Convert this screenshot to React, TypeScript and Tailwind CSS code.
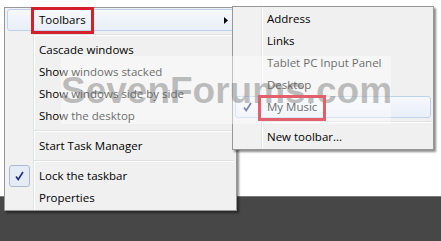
import type { ReactNode } from "react";

type Item = { label?: string; sep?: boolean; checked?: boolean; hover?: boolean; submenu?: boolean };

const mainItems: Item[] = [
  { label: "Toolbars", hover: true, submenu: true },
  { sep: true },
  { label: "Cascade windows" },
  { label: "Show windows stacked" },
  { label: "Show windows side by side" },
  { label: "Show the desktop" },
  { sep: true },
  { label: "Start Task Manager" },
  { sep: true },
  { label: "Lock the taskbar", checked: true },
  { label: "Properties" },
];

const toolbarItems: Item[] = [
  { label: "Address" },
  { label: "Links" },
  { label: "Tablet PC Input Panel" },
  { label: "Desktop" },
  { label: "My Music", checked: true, hover: true },
  { sep: true },
  { label: "New toolbar..." },
];

function Check() {
  return (
    <svg width="9" height="10" viewBox="0 0 9 10">
      <path d="M1 5.5 L3.2 8.5 L8 1" fill="none" stroke="#1f2d86" strokeWidth="1.6" />
    </svg>
  );
}

function Row({ item, boxed }: { item: Item; boxed: boolean }) {
  if (item.sep) {
    return (
      <div className="flex h-[8px] flex-col justify-center pl-[29px] pr-[2px]">
        <div className="h-px bg-[#e0e0e0]" />
        <div className="h-px bg-white" />
      </div>
    );
  }

  let mark: ReactNode = null;
  if (item.checked) {
    mark = boxed ? (
      <div className="ml-px flex h-[22px] w-[21px] items-center justify-center rounded-[3px] border border-[#aeb9d0] bg-[#e6ecf6]">
        <Check />
      </div>
    ) : (
      <div className="flex w-[22px] justify-center">
        <Check />
      </div>
    );
  }

  return (
    <div
      className={`mx-[2px] flex h-[22px] items-center rounded-[3px] border ${
        item.hover
          ? "border-[#bcd2ec] bg-[linear-gradient(#f5f8fc,#e9eff8)]"
          : "border-transparent"
      }`}
    >
      <div className="flex w-[31px] items-center">{mark}</div>
      <span className="flex-1 text-black">{item.label}</span>
      {item.submenu && (
        <svg width="4" height="7" viewBox="0 0 4 7" className="mr-[5px]">
          <path d="M0 0 L4 3.5 L0 7 Z" fill="#000" />
        </svg>
      )}
    </div>
  );
}

function Menu({ items, boxed, className }: { items: Item[]; boxed: boolean; className: string }) {
  return (
    <div
      className={`absolute border border-[#979797] bg-[linear-gradient(to_right,#f1f1f1_28px,#e2e3e3_28px,#e2e3e3_29px,#ffffff_29px,#ffffff_30px,#f0f0f0_30px)] py-px shadow-[2px_2px_2px_rgba(0,0,0,0.45)] ${className}`}
    >
      {items.map((item, i) => (
        <Row key={i} item={item} boxed={boxed} />
      ))}
    </div>
  );
}

export default function App() {
  return (
    <div className="relative h-[241px] w-[441px] overflow-hidden bg-white font-['Open_Sans','Noto_Sans',sans-serif] text-[11.5px] leading-none">
      <div className="h-[196px] bg-white" />
      <div className="h-[45px] border-t border-[#7a7a7a] bg-[#474747]" />

      <Menu items={mainItems} boxed className="left-[4px] top-[7px] w-[233px]" />
      <Menu items={toolbarItems} boxed={false} className="left-[232px] top-[6px] w-[202px]" />

      {/* forum watermark */}
      <div className="absolute left-[61px] top-[56px] flex h-[68px] w-[330px] items-center bg-white/40">
        <span className="font-['Liberation_Sans',Arial,sans-serif] text-[37px] font-bold text-[rgba(90,90,90,0.38)]">
          SevenForums.com
        </span>
      </div>

      {/* annotation boxes */}
      <div className="absolute left-[31px] top-[7px] h-[27px] w-[63px] border-[3px] border-[#d3202b]" />
      <div className="absolute left-[258px] top-[95px] h-[26px] w-[68px] border-[3px] border-[#e3606a]" />
    </div>
  );
}
